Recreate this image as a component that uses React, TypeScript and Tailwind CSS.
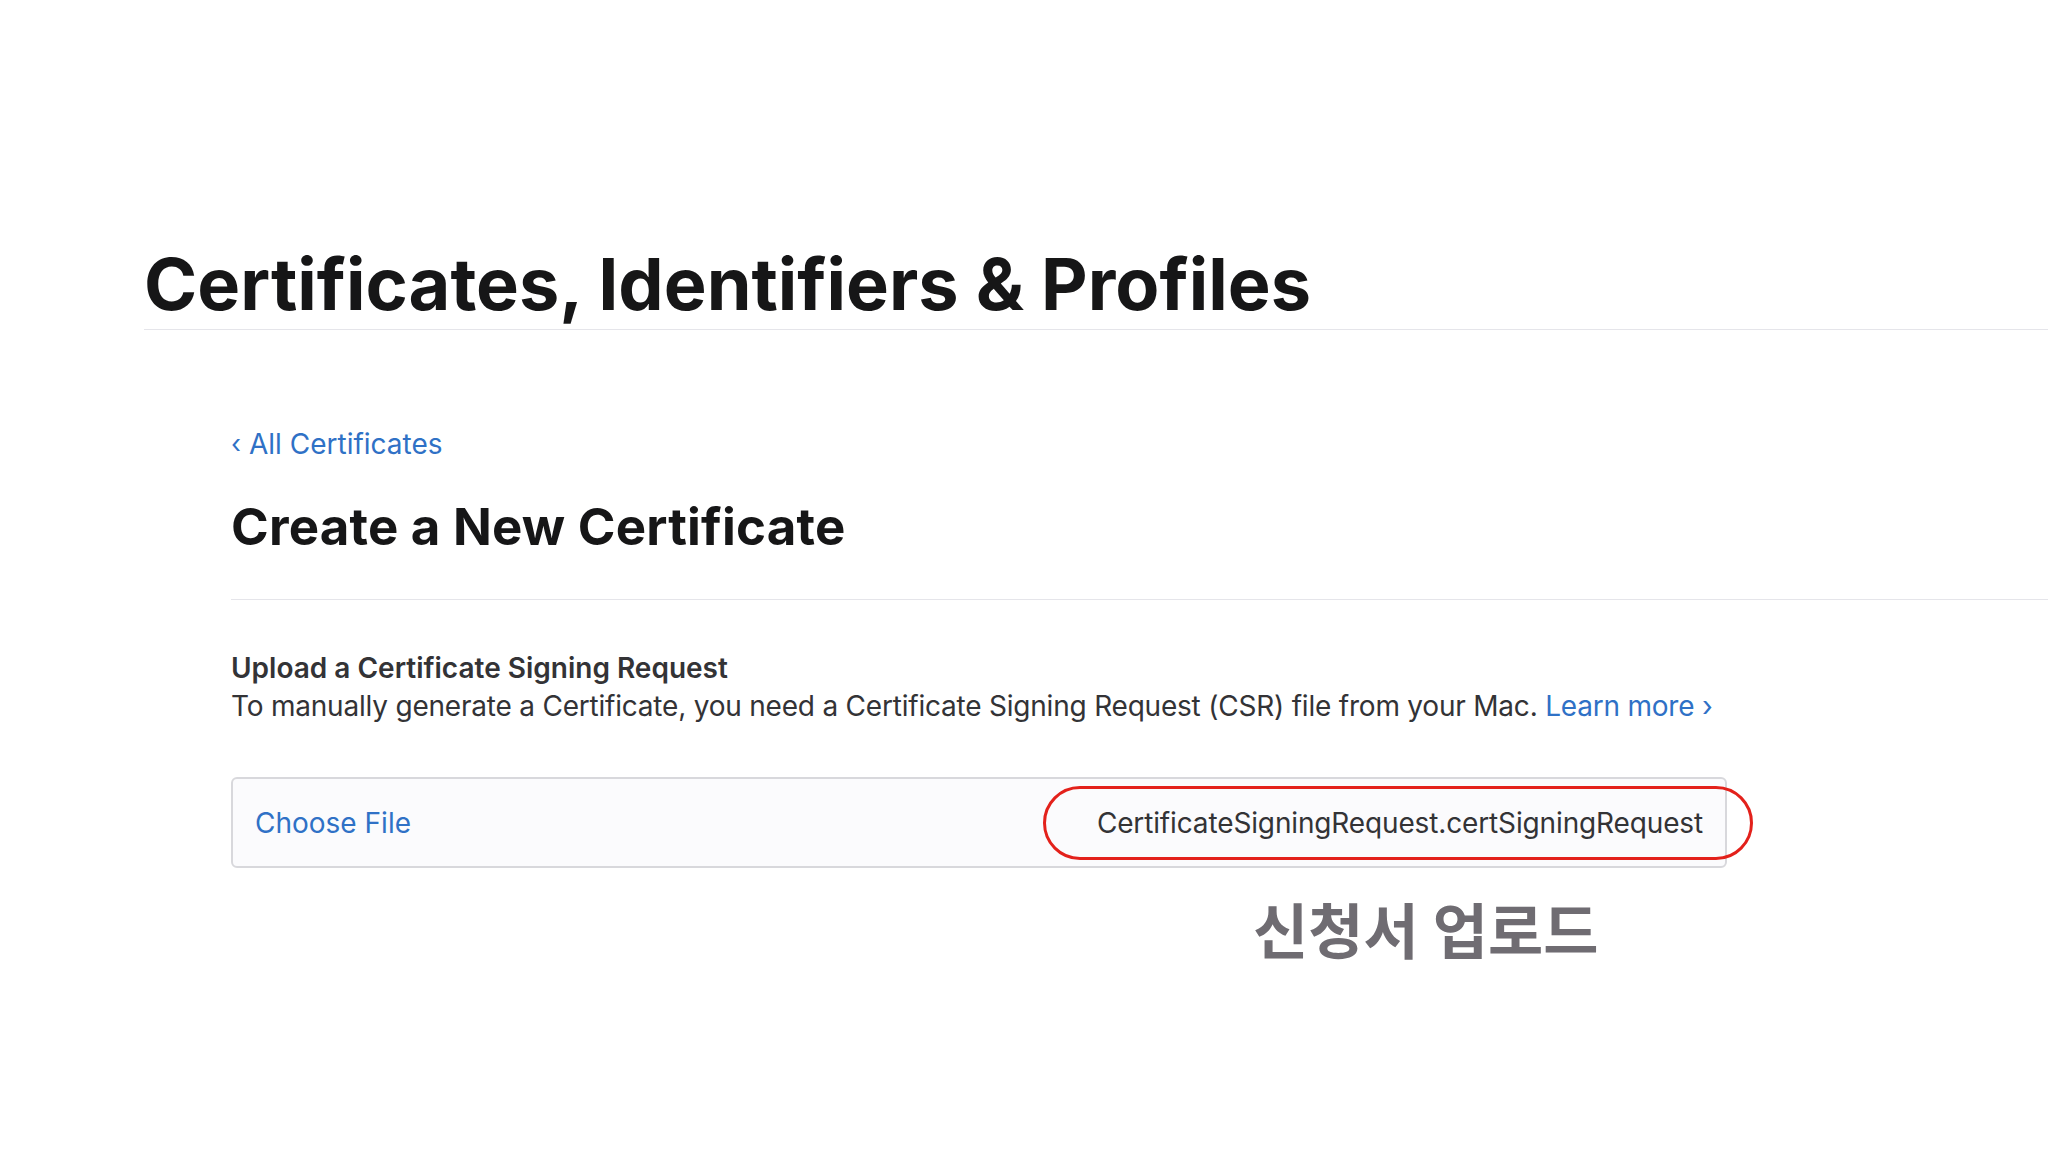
export default function App() {
  return (
    <div className="min-h-[1152px] w-[2048px] overflow-hidden bg-white font-['Inter','Noto_Sans_CJK_KR',sans-serif] text-[#1d1d1f]">
      <div className="pl-[144px] pt-[248px]">
        <h1 className="border-b border-[#e5e5ea] pb-[9px] text-[72px] font-bold leading-none text-[#161617]">
          Certificates, Identifiers &amp; Profiles
        </h1>

        <div className="pl-[87px] pt-[98px]">
          <a className="flex items-center gap-[8px] text-[28px] leading-[32px] text-[#2f71c6]">
            <span className="text-[26px]">‹</span>
            <span>All Certificates</span>
          </a>
          <h2 className="mt-[41px] border-b border-[#e5e5ea] pb-[47px] text-[51px] font-bold leading-none tracking-[0.004em] text-[#161617]">
            Create a New Certificate
          </h2>

          <div className="pt-[50px]">
            <h3 className="text-[28px] font-semibold leading-[36px] text-[#333336]">
              Upload a Certificate Signing Request
            </h3>
            <p className="mt-[2px] text-[28px] leading-[36px] tracking-[-0.0075em] text-[#333336]">
              To manually generate a Certificate, you need a Certificate Signing Request (CSR) file from your Mac.{" "}
              <a className="text-[#2f71c6]">Learn more ›</a>
            </p>
          </div>

          <div className="mt-[53px] flex h-[91px] w-[1496px] items-center justify-between rounded-[6px] border-2 border-[#d8d8dc] bg-[#fbfbfd] pl-[22px]">
            <span className="text-[28px] text-[#2f71c6]">Choose File</span>
            <span className="-mr-[28px] flex h-[74px] items-center rounded-full border-[3px] border-[#e3211b] pl-[51px] pr-[47px] text-[28px] tracking-[-0.005em] text-[#333336]">
              CertificateSigningRequest.certSigningRequest
            </span>
          </div>

          <div className="ml-[1022px] mt-[34px] text-[60px] font-bold leading-none text-[#6f6c72]">
            신청서 업로드
          </div>
        </div>
      </div>
    </div>
  );
}
